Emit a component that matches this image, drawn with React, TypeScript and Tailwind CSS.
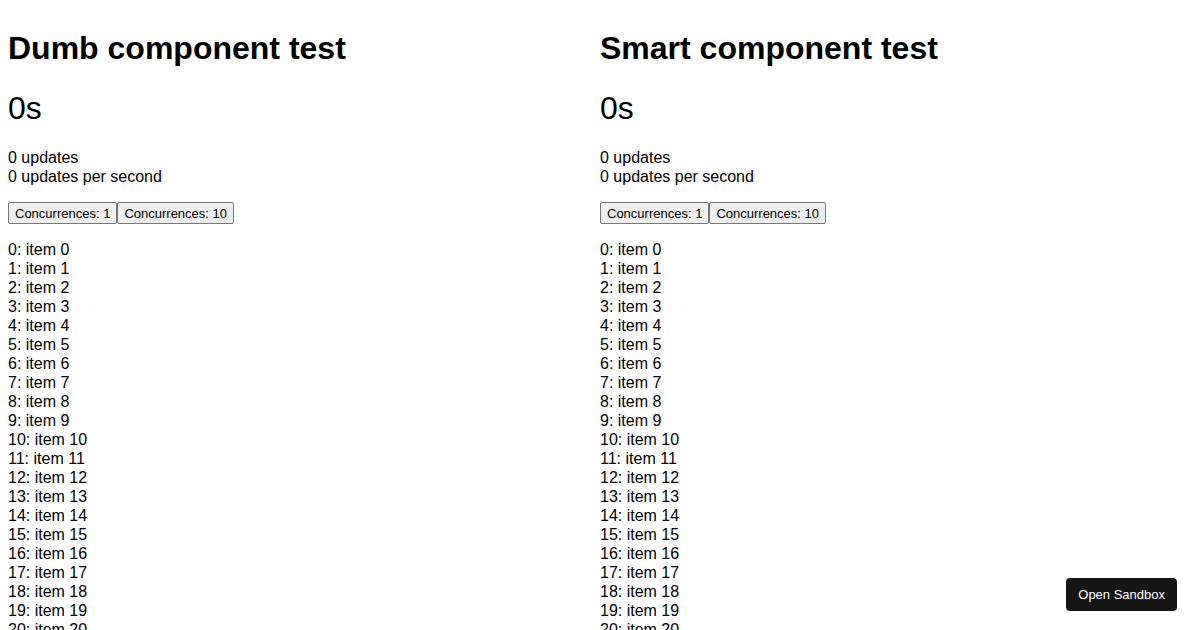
const items = Array.from({ length: 30 }, (_, i) => i);

function Panel({ title }: { title: string }) {
  return (
    <div className="min-w-0">
      <h1 className="mt-[22px] mb-0 text-[32px] font-bold leading-[37px]">{title}</h1>
      <div className="mt-[23px] text-[32px] leading-[37px]">0s</div>
      <div className="mt-[21px] text-base leading-[19px]">
        <div>0 updates</div>
        <div>0 updates per second</div>
      </div>
      <div className="mt-[16px] flex">
        <button className="h-[22px] rounded-[2px] border border-[#767676] bg-[#efefef] px-[6px] text-[13px] leading-none text-black">
          Concurrences: 1
        </button>
        <button className="h-[22px] rounded-[2px] border border-[#767676] bg-[#efefef] px-[6px] text-[13px] leading-none text-black">
          Concurrences: 10
        </button>
      </div>
      <ul className="mt-[16px] text-base leading-[19px]">
        {items.map((i) => (
          <li key={i}>
            {i}: item {i}
          </li>
        ))}
      </ul>
    </div>
  );
}

export default function App() {
  return (
    <div
      className="h-[630px] overflow-hidden bg-white text-black"
      style={{ fontFamily: '"Liberation Sans", Arial, sans-serif' }}
    >
      <div className="grid grid-cols-2 px-2 pt-2">
        <Panel title="Dumb component test" />
        <Panel title="Smart component test" />
      </div>
      <button className="fixed right-[23px] bottom-[19px] h-[33px] rounded-[4px] bg-[#151515] px-[12px] text-[13px] text-white">
        Open Sandbox
      </button>
    </div>
  );
}
